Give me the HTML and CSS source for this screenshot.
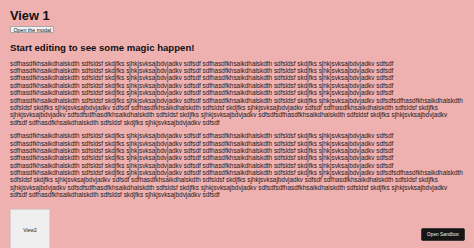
FILE: index.html
```html
<!DOCTYPE html>
<html>
<head>
<meta charset="utf-8">
<link rel="stylesheet" href="styles.css">
</head>
<body>
<div class="app">
  <h1 class="title">View 1</h1>
  <button class="modal-btn">Open the modal</button>
  <h2 class="subtitle">Start editing to see some magic happen!</h2>
  <p class="filler">sdfhasdfkhsaikdhalskdth sdfsldsf skdjfks sjhkjsvksajbdvjadkv sdfsdf sdfhasdfkhsaikdhalskdth sdfsldsf skdjfks sjhkjsvksajbdvjadkv sdfsdf<br>sdfhasdfkhsaikdhalskdth sdfsldsf skdjfks sjhkjsvksajbdvjadkv sdfsdf sdfhasdfkhsaikdhalskdth sdfsldsf skdjfks sjhkjsvksajbdvjadkv sdfsdf<br>sdfhasdfkhsaikdhalskdth sdfsldsf skdjfks sjhkjsvksajbdvjadkv sdfsdf sdfhasdfkhsaikdhalskdth sdfsldsf skdjfks sjhkjsvksajbdvjadkv sdfsdf<br>sdfhasdfkhsaikdhalskdth sdfsldsf skdjfks sjhkjsvksajbdvjadkv sdfsdf sdfhasdfkhsaikdhalskdth sdfsldsf skdjfks sjhkjsvksajbdvjadkv sdfsdf<br>sdfhasdfkhsaikdhalskdth sdfsldsf skdjfks sjhkjsvksajbdvjadkv sdfsdf sdfhasdfkhsaikdhalskdth sdfsldsf skdjfks sjhkjsvksajbdvjadkv sdfsdf<br>sdfhasdfkhsaikdhalskdth sdfsldsf skdjfks sjhkjsvksajbdvjadkv sdfsdf sdfhasdfkhsaikdhalskdth sdfsldsf skdjfks sjhkjsvksajbdvjadkv sdfsdfsdfhasdfkhsaikdhalskdth sdfsldsf skdjfks sjhkjsvksajbdvjadkv sdfsdf sdfhasdfkhsaikdhalskdth sdfsldsf skdjfks sjhkjsvksajbdvjadkv sdfsdf sdfhasdfkhsaikdhalskdth sdfsldsf skdjfks sjhkjsvksajbdvjadkv sdfsdfsdfhasdfkhsaikdhalskdth sdfsldsf skdjfks sjhkjsvksajbdvjadkv sdfsdfsdfhasdfkhsaikdhalskdth sdfsldsf skdjfks sjhkjsvksajbdvjadkv sdfsdf sdfhasdfkhsaikdhalskdth sdfsldsf skdjfks sjhkjsvksajbdvjadkv sdfsdf</p>
  <p class="filler">sdfhasdfkhsaikdhalskdth sdfsldsf skdjfks sjhkjsvksajbdvjadkv sdfsdf sdfhasdfkhsaikdhalskdth sdfsldsf skdjfks sjhkjsvksajbdvjadkv sdfsdf<br>sdfhasdfkhsaikdhalskdth sdfsldsf skdjfks sjhkjsvksajbdvjadkv sdfsdf sdfhasdfkhsaikdhalskdth sdfsldsf skdjfks sjhkjsvksajbdvjadkv sdfsdf<br>sdfhasdfkhsaikdhalskdth sdfsldsf skdjfks sjhkjsvksajbdvjadkv sdfsdf sdfhasdfkhsaikdhalskdth sdfsldsf skdjfks sjhkjsvksajbdvjadkv sdfsdf<br>sdfhasdfkhsaikdhalskdth sdfsldsf skdjfks sjhkjsvksajbdvjadkv sdfsdf sdfhasdfkhsaikdhalskdth sdfsldsf skdjfks sjhkjsvksajbdvjadkv sdfsdf<br>sdfhasdfkhsaikdhalskdth sdfsldsf skdjfks sjhkjsvksajbdvjadkv sdfsdf sdfhasdfkhsaikdhalskdth sdfsldsf skdjfks sjhkjsvksajbdvjadkv sdfsdf<br>sdfhasdfkhsaikdhalskdth sdfsldsf skdjfks sjhkjsvksajbdvjadkv sdfsdf sdfhasdfkhsaikdhalskdth sdfsldsf skdjfks sjhkjsvksajbdvjadkv sdfsdfsdfhasdfkhsaikdhalskdth sdfsldsf skdjfks sjhkjsvksajbdvjadkv sdfsdf sdfhasdfkhsaikdhalskdth sdfsldsf skdjfks sjhkjsvksajbdvjadkv sdfsdf sdfhasdfkhsaikdhalskdth sdfsldsf skdjfks sjhkjsvksajbdvjadkv sdfsdfsdfhasdfkhsaikdhalskdth sdfsldsf skdjfks sjhkjsvksajbdvjadkv sdfsdfsdfhasdfkhsaikdhalskdth sdfsldsf skdjfks sjhkjsvksajbdvjadkv sdfsdf sdfhasdfkhsaikdhalskdth sdfsldsf skdjfks sjhkjsvksajbdvjadkv sdfsdf</p>
  <div class="view2">View2</div>
</div>
<a class="sandbox-btn">Open Sandbox</a>
</body>
</html>
```
FILE: styles.css
```css
html, body {
  margin: 0;
  padding: 0;
  background: #efb0b0;
  height: 100%;
  overflow: hidden;
}
body {
  font-family: "Liberation Sans", Arial, Helvetica, sans-serif;
  color: #1a1a1a;
}
.app {
  padding: 0 10px;
}
.title {
  font-size: 12.8px;
  line-height: 14.7px;
  font-weight: bold;
  margin: 9px 0 2px;
  color: #111;
}
.modal-btn {
  display: block;
  font-family: "Liberation Sans", Arial, sans-serif;
  font-size: 5.3px;
  line-height: 6px;
  padding: 0 2.4px;
  height: 7px;
  background: #f2f2f2;
  border: 1px solid #a8a8a8;
  border-radius: 1px;
  color: #111;
}
.subtitle {
  font-size: 9.6px;
  line-height: 11px;
  font-weight: bold;
  margin: 9px 0 7px;
  color: #111;
}
.filler {
  font-size: 6.4px;
  line-height: 7.36px;
  margin: 6.4px 0;
}
.view2 {
  width: 38px;
  height: 40px;
  margin-top: 10px;
  background: #efefef;
  border: 1px solid #d4d4d4;
  display: flex;
  align-items: center;
  justify-content: center;
  font-size: 5px;
  color: #222;
}
.sandbox-btn {
  position: fixed;
  right: 9px;
  bottom: 7px;
  width: 44px;
  height: 13px;
  box-sizing: border-box;
  background: #151515;
  border: 1px solid #3a3a3a;
  border-radius: 2px;
  color: #f2f2f2;
  font-size: 4.8px;
  display: flex;
  align-items: center;
  justify-content: center;
}
```
